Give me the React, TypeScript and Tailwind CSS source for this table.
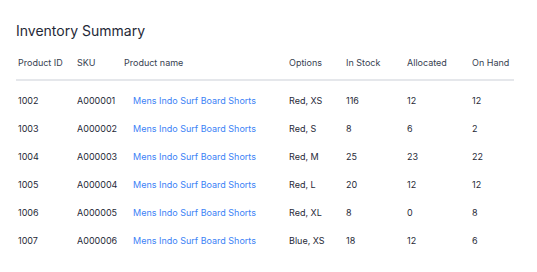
const rows = [
  { id: '1002', sku: 'A000001', options: 'Red, XS', stock: 116, allocated: 12, onHand: 12 },
  { id: '1003', sku: 'A000002', options: 'Red, S', stock: 8, allocated: 6, onHand: 2 },
  { id: '1004', sku: 'A000003', options: 'Red, M', stock: 25, allocated: 23, onHand: 22 },
  { id: '1005', sku: 'A000004', options: 'Red, L', stock: 20, allocated: 12, onHand: 12 },
  { id: '1006', sku: 'A000005', options: 'Red, XL', stock: 8, allocated: 0, onHand: 8 },
  { id: '1007', sku: 'A000006', options: 'Blue, XS', stock: 18, allocated: 12, onHand: 6 },
]

export default function App() {
  return (
    <div className="min-h-[272px] bg-white px-4 pt-[21px] font-['Inter',sans-serif] text-[#1f2937]">
      <h1 className="text-[14px] leading-5 text-[#1f2937]">Inventory Summary</h1>
      <table className="mt-[16px] w-[498px] table-fixed border-collapse text-left text-[9px] leading-[12px]">
        <colgroup>
          <col className="w-[61px]" />
          <col className="w-[47px]" />
          <col className="w-[165px]" />
          <col className="w-[57px]" />
          <col className="w-[61px]" />
          <col className="w-[65px]" />
          <col className="w-[42px]" />
        </colgroup>
        <thead>
          <tr className="h-[23px] border-b-2 border-[#e5e7eb] align-top text-[#374151]">
            <th className="pl-[2px] font-normal">Product ID</th>
            <th className="font-normal">SKU</th>
            <th className="font-normal">Product name</th>
            <th className="font-normal">Options</th>
            <th className="font-normal">In Stock</th>
            <th className="font-normal">Allocated</th>
            <th className="font-normal">On Hand</th>
          </tr>
        </thead>
        <tbody>
          {rows.map((r, i) => {
            const pad = i === 0 ? 'pt-[14px] pb-[8px]' : 'py-[8px]'
            return (
              <tr key={r.id}>
                <td className={`${pad} pl-[2px]`}>{r.id}</td>
                <td className={pad}>{r.sku}</td>
                <td className={`${pad} pl-[9px]`}>
                  <a href="#" className="text-[#3b82f6]">Mens Indo Surf Board Shorts</a>
                </td>
                <td className={pad}>{r.options}</td>
                <td className={pad}>{r.stock}</td>
                <td className={pad}>{r.allocated}</td>
                <td className={pad}>{r.onHand}</td>
              </tr>
            )
          })}
        </tbody>
      </table>
    </div>
  )
}
